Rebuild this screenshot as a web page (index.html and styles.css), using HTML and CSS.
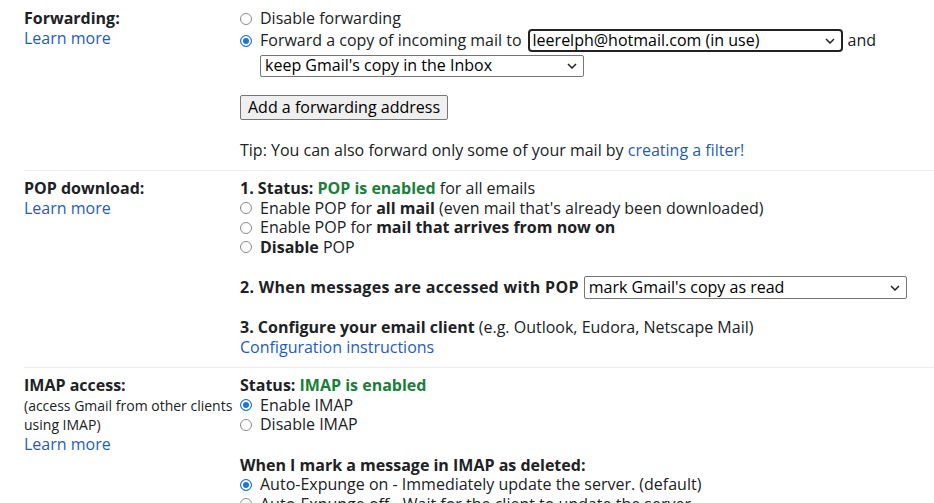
FILE: index.html
```html
<!DOCTYPE html>
<html lang="en">
<head>
<meta charset="utf-8">
<title>Forwarding and POP/IMAP</title>
<link rel="stylesheet" href="styles.css">
</head>
<body>
<div class="settings">
  <div class="row first">
    <div class="label">
      <div class="line"><b>Forwarding:</b></div>
      <div class="line"><a class="link" href="#">Learn more</a></div>
    </div>
    <div class="content">
      <div class="line opt"><span class="radio"></span><span>Disable forwarding</span></div>
      <div class="line opt tall"><span class="radio on"></span><span>Forward a copy of incoming mail to</span>
        <span class="select sel1 focus"><span class="sel-text">leerelph@hotmail.com (in use)</span><svg class="chev" viewBox="0 0 10 6" width="10" height="6"><path d="M1 1l4 4 4-4" fill="none" stroke="#202124" stroke-width="1.5"/></svg></span><span>and</span></div>
      <div class="line indent tall"><span class="select sel2"><span class="sel-text">keep Gmail's copy in the Inbox</span><svg class="chev" viewBox="0 0 10 6" width="10" height="6"><path d="M1 1l4 4 4-4" fill="none" stroke="#202124" stroke-width="1.5"/></svg></span></div>
      <div class="btn-line"><span class="button">Add a forwarding address</span></div>
      <div class="line tip">Tip: You can also forward only some of your mail by <a class="link" href="#">creating a filter!</a></div>
    </div>
  </div>

  <div class="row">
    <div class="label">
      <div class="line"><b>POP download:</b></div>
      <div class="line"><a class="link" href="#">Learn more</a></div>
    </div>
    <div class="content">
      <div class="line"><b>1. Status: </b><b class="green">POP is enabled</b> for all emails</div>
      <div class="line opt"><span class="radio"></span><span>Enable POP for <b>all mail</b> (even mail that's already been downloaded)</span></div>
      <div class="line opt"><span class="radio"></span><span>Enable POP for <b>mail that arrives from now on</b></span></div>
      <div class="line opt"><span class="radio"></span><span><b>Disable</b> POP</span></div>
      <div class="line step2 tall"><b class="wide">2. When messages are accessed with POP</b><span class="select sel3"><span class="sel-text">mark Gmail's copy as read</span><svg class="chev" viewBox="0 0 10 6" width="10" height="6"><path d="M1 1l4 4 4-4" fill="none" stroke="#202124" stroke-width="1.5"/></svg></span></div>
      <div class="line step3"><b>3. Configure your email client</b> (e.g. Outlook, Eudora, Netscape Mail)</div>
      <div class="line"><a class="link" href="#">Configuration instructions</a></div>
    </div>
  </div>

  <div class="row">
    <div class="label">
      <div class="line"><b>IMAP access:</b></div>
      <div class="line small">(access Gmail from other clients<br>using IMAP)</div>
      <div class="line"><a class="link" href="#">Learn more</a></div>
    </div>
    <div class="content">
      <div class="line"><b>Status: </b><b class="green">IMAP is enabled</b></div>
      <div class="line opt"><span class="radio on"></span><span>Enable IMAP</span></div>
      <div class="line opt"><span class="radio"></span><span>Disable IMAP</span></div>
      <div class="line step"><b>When I mark a message in IMAP as deleted:</b></div>
      <div class="line opt"><span class="radio on"></span><span>Auto-Expunge on - Immediately update the server. (default)</span></div>
      <div class="line opt"><span class="radio"></span><span>Auto-Expunge off - Wait for the client to update the server.</span></div>
    </div>
  </div>
</div>
</body>
</html>
```
FILE: styles.css
```css
html, body {
  margin: 0;
  padding: 0;
  background: #fff;
}
body {
  font-family: "Open Sans", Roboto, Arial, sans-serif;
  font-size: 16px;
  color: #202124;
  overflow: hidden;
  height: 503px;
}
b { font-weight: 700; }
.settings {
  margin-left: 24px;
}
.row {
  display: grid;
  grid-template-columns: 216px 1fr;
  border-top: 1px solid #ebedf0;
  padding: 8px 0 10px;
}
.row.first {
  border-top: none;
  padding-top: 9px;
}
.line {
  line-height: 19.5px;
  white-space: nowrap;
}
.label .small {
  font-size: 14px;
}
.link {
  color: #1f5bbf;
  text-decoration: none;
}
.green { color: #188038; }
.wide { letter-spacing: 0.28px; }
.opt {
  display: flex;
  align-items: center;
}
.radio {
  width: 12px;
  height: 12px;
  box-sizing: border-box;
  border: 1px solid #8a8a8a;
  border-radius: 50%;
  margin-right: 8px;
  flex: none;
  background: #fff;
}
.radio.on {
  border: 1px solid #1a73e8;
  background: #1a73e8;
  box-shadow: inset 0 0 0 2px #fff;
}
.tall {
  display: flex;
  align-items: center;
  height: 24px;
}
.indent { padding-left: 20px; }
.select {
  display: inline-flex;
  align-items: center;
  justify-content: space-between;
  box-sizing: border-box;
  height: 22px;
  border: 1px solid #767676;
  border-radius: 2px;
  padding: 0 6px 0 4px;
  background: #fff;
  color: #000;
}
.sel1 {
  width: 315px;
  height: 23px;
  margin: 0 5px 0 6px;
}
.focus {
  border: 2px solid #222;
  border-radius: 4px;
  padding-left: 3px;
}
.sel2 {
  width: 324px;
  margin-top: 2px;
}
.sel3 {
  width: 323px;
  height: 23px;
  margin-left: 5px;
}
.chev { flex: none; }
.btn-line {
  margin-top: 18px;
  display: flex;
}
.button {
  display: inline-flex;
  align-items: center;
  box-sizing: border-box;
  height: 25px;
  width: 208px;
  padding: 0 7px;
  background: #efefef;
  border: 1px solid #767676;
  border-radius: 2px;
  color: #000;
}
.tip { margin-top: 21px; }
.step2 { margin-top: 19px; height: 23px; }
.step3 { margin-top: 19px; }
.step { margin-top: 21px; }
```
